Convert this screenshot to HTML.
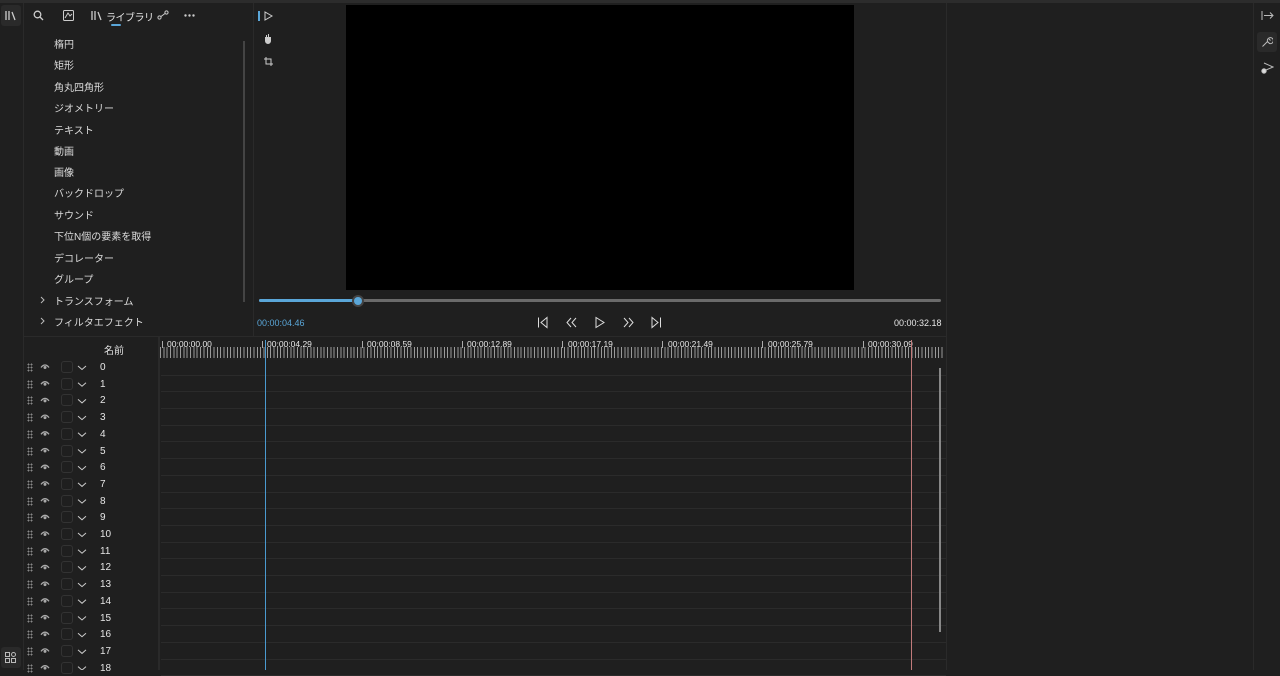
<!DOCTYPE html>
<html><head><meta charset="utf-8"><style>
*{margin:0;padding:0;box-sizing:border-box}
html,body{width:1280px;height:670px}
body{background:#1f1f1f;overflow:hidden;position:relative;font-family:"Liberation Sans","Noto Sans CJK JP",sans-serif;color:#e0e0e0;font-size:10px}
.a{position:absolute}
.lib div{position:absolute;left:54px;font-size:10px;color:#dcdcdc}
.row{position:absolute;left:24px;width:922px;height:16.7px}
.row .g{position:absolute;left:3px;top:4px;width:6px;height:9px;background:radial-gradient(circle,#888 0.8px,transparent 1px) 0 0/3px 3px}
.row .cb{position:absolute;left:37px;top:2px;width:12px;height:12px;border:1px solid #333;border-radius:3px}
.row .n{position:absolute;left:76px;top:3px;font-size:10px;color:#e6e6e6}
.row .ln{position:absolute;left:137px;right:0;bottom:0;height:1px;background:#2b2b2b}
.lab{position:absolute;top:339px;font-size:8.5px;color:#e6e6e6}
</style></head><body>
<div class="a" style="left:0;top:0;width:1280px;height:3px;background:#2c2c2c"></div>
<div class="a" style="left:23px;top:3px;width:1px;height:667px;background:#2a2a2a"></div>
<div class="a" style="left:253px;top:3px;width:1px;height:333px;background:#2a2a2a"></div>
<div class="a" style="left:946px;top:3px;width:1px;height:667px;background:#2a2a2a"></div>
<div class="a" style="left:1253px;top:3px;width:1px;height:667px;background:#2a2a2a"></div>
<div class="a" style="left:24px;top:336px;width:922px;height:1px;background:#2a2a2a"></div>
<div class="a" style="left:158px;top:337px;width:2px;height:333px;background:#2a2a2a"></div>
<div class="a" style="left:1px;top:5px;width:20px;height:21px;background:#2a2a2a;border-radius:3px"></div>
<svg class="a" style="left:5px;top:10px" width="12" height="11"><path d="M1 1v9M4 1v9M7 2l3 8" stroke="#ccc" stroke-width="1.3" fill="none"/></svg>
<div class="a" style="left:1px;top:647px;width:20px;height:21px;background:#2a2a2a;border-radius:3px"></div>
<svg class="a" style="left:5px;top:652px" width="12" height="11" fill="none" stroke="#bbb"><rect x="0.5" y="0.5" width="4" height="4"/><rect x="6.5" y="0.5" width="4" height="4" rx="2"/><rect x="0.5" y="6.5" width="4" height="4"/><rect x="6.5" y="6.5" width="4" height="4"/></svg>
<svg class="a" style="left:33px;top:10px" width="11" height="11" fill="none" stroke="#ccc" stroke-width="1.3"><circle cx="4.5" cy="4.5" r="3.3"/><path d="M7 7l3 3"/></svg>
<svg class="a" style="left:63px;top:10px" width="11" height="11" fill="none" stroke="#ccc"><rect x="0.5" y="0.5" width="10" height="10" rx="1"/><path d="M2 8l3-5 2 3 2-2"/></svg>
<svg class="a" style="left:91px;top:10px" width="12" height="11"><path d="M1 1v9M4 1v9M7 2l3 8" stroke="#ccc" stroke-width="1.3" fill="none"/></svg>
<div class="a" style="left:106px;top:9px;font-size:10px;color:#e8e8e8;letter-spacing:-0.5px">ライブラリ</div>
<div class="a" style="left:111px;top:24px;width:10px;height:2px;background:#5aa6d8;border-radius:1px"></div>
<svg class="a" style="left:157px;top:10px" width="12" height="10" fill="none" stroke="#ccc"><circle cx="2.5" cy="7.5" r="1.6"/><circle cx="9.5" cy="2.5" r="1.6"/><path d="M4 6.5l4-3"/></svg>
<svg class="a" style="left:184px;top:14px" width="11" height="3" fill="#ccc"><circle cx="1.5" cy="1.5" r="1.2"/><circle cx="5.5" cy="1.5" r="1.2"/><circle cx="9.5" cy="1.5" r="1.2"/></svg>
<div class="a" style="left:243px;top:41px;width:2px;height:261px;background:#444"></div>
<div class="lib">
<div style="top:36px">楕円</div><div style="top:57px">矩形</div><div style="top:79px">角丸四角形</div><div style="top:100px">ジオメトリー</div><div style="top:122px">テキスト</div><div style="top:143px">動画</div><div style="top:164px">画像</div><div style="top:185px">バックドロップ</div><div style="top:207px">サウンド</div><div style="top:228px">下位N個の要素を取得</div><div style="top:250px">デコレーター</div><div style="top:271px">グループ</div><div style="top:293px">トランスフォーム</div><div style="top:314px">フィルタエフェクト</div>
</div>
<svg class="a" style="left:40px;top:296px" width="5" height="8" fill="none" stroke="#bbb"><path d="M1 1l3 3-3 3"/></svg>
<svg class="a" style="left:40px;top:317px" width="5" height="8" fill="none" stroke="#bbb"><path d="M1 1l3 3-3 3"/></svg>
<div class="a" style="left:258px;top:11px;width:2px;height:10px;background:#5aa6d8"></div>
<svg class="a" style="left:264px;top:11px" width="9" height="10" fill="none" stroke="#ccc"><path d="M1 1v8l7-4z"/></svg>
<svg class="a" style="left:263px;top:33px" width="10" height="11" fill="#ccc"><path d="M2 4h6v4a3 3 0 0 1-6 0z M3 2h1v3H3zM5 1h1v3H5z"/></svg>
<svg class="a" style="left:264px;top:57px" width="9" height="9" fill="none" stroke="#ccc"><path d="M2 0v7h7M0 2h7v7"/></svg>
<div class="a" style="left:346px;top:5px;width:508px;height:285px;background:#000"></div>
<div class="a" style="left:259px;top:299px;width:682px;height:3px;background:#6a6a6a;border-radius:2px"></div>
<div class="a" style="left:259px;top:299px;width:99px;height:3px;background:#5aa6d8;border-radius:2px"></div>
<div class="a" style="left:352px;top:295px;width:12px;height:12px;border-radius:50%;background:#444"></div>
<div class="a" style="left:354px;top:297px;width:8px;height:8px;border-radius:50%;background:#5aa6d8"></div>
<div class="a" style="left:257px;top:318px;font-size:9px;color:#5aa6d8">00:00:04.46</div>
<div class="a" style="left:894px;top:318px;font-size:9px;color:#e6e6e6">00:00:32.18</div>
<svg class="a" style="left:537px;top:316px" width="126" height="13" fill="none" stroke="#ddd"><path d="M1.5 1.5v10M10 1.5l-6 5 6 5z"/><path d="M34 2l-4 4.5 4 4.5M39 2l-4 4.5 4 4.5"/><path d="M59 1.5v10l8-5z"/><path d="M87 2l4 4.5-4 4.5M92 2l4 4.5-4 4.5"/><path d="M115 1.5l6 5-6 5zM123.5 1.5v10"/></svg>
<div class="a" style="left:104px;top:342px;font-size:10px">名前</div>
<div class="a" style="left:160px;top:347px;width:785px;height:11px;background:repeating-linear-gradient(90deg,#9a9a9a 0 1px,transparent 1px 3.34px)"></div>
<div class="a" style="left:160px;top:337px;width:785px;height:10px;background:#1f1f1f"></div>
<div class="lab" style="left:167px">00:00:00.00</div><div class="lab" style="left:267px">00:00:04.29</div><div class="lab" style="left:367px">00:00:08.59</div><div class="lab" style="left:467px">00:00:12.89</div><div class="lab" style="left:568px">00:00:17.19</div><div class="lab" style="left:668px">00:00:21.49</div><div class="lab" style="left:768px">00:00:25.79</div><div class="lab" style="left:868px">00:00:30.09</div>
<div class="a" style="left:162px;top:341px;width:1px;height:7px;background:#aaa"></div><div class="a" style="left:262px;top:341px;width:1px;height:7px;background:#aaa"></div><div class="a" style="left:362px;top:341px;width:1px;height:7px;background:#aaa"></div><div class="a" style="left:462px;top:341px;width:1px;height:7px;background:#aaa"></div><div class="a" style="left:562px;top:341px;width:1px;height:7px;background:#aaa"></div><div class="a" style="left:662px;top:341px;width:1px;height:7px;background:#aaa"></div><div class="a" style="left:762px;top:341px;width:1px;height:7px;background:#aaa"></div><div class="a" style="left:863px;top:341px;width:1px;height:7px;background:#aaa"></div>
<div style="position:absolute;left:0;top:359px">
<div class="row" style="top:0"><div class="g"></div><div class="cb"></div><div class="n">0</div><div class="ln"></div></div>
<div class="row" style="top:16.7px"><div class="g"></div><div class="cb"></div><div class="n">1</div><div class="ln"></div></div>
<div class="row" style="top:33.4px"><div class="g"></div><div class="cb"></div><div class="n">2</div><div class="ln"></div></div>
<div class="row" style="top:50.1px"><div class="g"></div><div class="cb"></div><div class="n">3</div><div class="ln"></div></div>
<div class="row" style="top:66.8px"><div class="g"></div><div class="cb"></div><div class="n">4</div><div class="ln"></div></div>
<div class="row" style="top:83.5px"><div class="g"></div><div class="cb"></div><div class="n">5</div><div class="ln"></div></div>
<div class="row" style="top:100.2px"><div class="g"></div><div class="cb"></div><div class="n">6</div><div class="ln"></div></div>
<div class="row" style="top:116.9px"><div class="g"></div><div class="cb"></div><div class="n">7</div><div class="ln"></div></div>
<div class="row" style="top:133.6px"><div class="g"></div><div class="cb"></div><div class="n">8</div><div class="ln"></div></div>
<div class="row" style="top:150.3px"><div class="g"></div><div class="cb"></div><div class="n">9</div><div class="ln"></div></div>
<div class="row" style="top:167px"><div class="g"></div><div class="cb"></div><div class="n">10</div><div class="ln"></div></div>
<div class="row" style="top:183.7px"><div class="g"></div><div class="cb"></div><div class="n">11</div><div class="ln"></div></div>
<div class="row" style="top:200.4px"><div class="g"></div><div class="cb"></div><div class="n">12</div><div class="ln"></div></div>
<div class="row" style="top:217.1px"><div class="g"></div><div class="cb"></div><div class="n">13</div><div class="ln"></div></div>
<div class="row" style="top:233.8px"><div class="g"></div><div class="cb"></div><div class="n">14</div><div class="ln"></div></div>
<div class="row" style="top:250.5px"><div class="g"></div><div class="cb"></div><div class="n">15</div><div class="ln"></div></div>
<div class="row" style="top:267.2px"><div class="g"></div><div class="cb"></div><div class="n">16</div><div class="ln"></div></div>
<div class="row" style="top:283.9px"><div class="g"></div><div class="cb"></div><div class="n">17</div><div class="ln"></div></div>
<div class="row" style="top:300.6px"><div class="g"></div><div class="cb"></div><div class="n">18</div><div class="ln"></div></div>
</div>
<svg class="a" style="left:38px;top:363px" width="52" height="307" fill="none">
<defs><g id="r"><path d="M3 4.5q4-5 8 0" stroke="#aaa" stroke-width="1.3"/><circle cx="7" cy="4.5" r="1.5" fill="#aaa"/><path d="M40 3l4 3.5 4-3.5" stroke="#ccc"/></g></defs>
<use href="#r" y="0"/><use href="#r" y="16.7"/><use href="#r" y="33.4"/><use href="#r" y="50.1"/><use href="#r" y="66.8"/><use href="#r" y="83.5"/><use href="#r" y="100.2"/><use href="#r" y="116.9"/><use href="#r" y="133.6"/><use href="#r" y="150.3"/><use href="#r" y="167"/><use href="#r" y="183.7"/><use href="#r" y="200.4"/><use href="#r" y="217.1"/><use href="#r" y="233.8"/><use href="#r" y="250.5"/><use href="#r" y="267.2"/><use href="#r" y="283.9"/><use href="#r" y="300.6"/>
</svg>
<div class="a" style="left:265px;top:340px;width:1px;height:330px;background:#4a9ad0"></div>
<div class="a" style="left:911px;top:340px;width:1px;height:330px;background:#c07a7a"></div>
<div class="a" style="left:939px;top:368px;width:2px;height:264px;background:#888"></div>
<svg class="a" style="left:1261px;top:10px" width="13" height="11" fill="none" stroke="#bbb"><path d="M1 1v9M3 5.5h9M9 2.5l3 3-3 3"/></svg>
<div class="a" style="left:1257px;top:32px;width:20px;height:20px;background:#2a2a2a;border-radius:3px"></div>
<svg class="a" style="left:1261px;top:36px" width="12" height="12" fill="none" stroke="#bbb"><path d="M1.5 10.5l5-5M6.5 5.5a3 3 0 1 1 2 2zM8 3l1.5 1.5"/></svg>
<svg class="a" style="left:1261px;top:61px" width="13" height="13" fill="none" stroke="#bbb"><path d="M3 2l9 4-7 3"/><circle cx="3" cy="10" r="2.2" fill="#ddd"/></svg>
</body></html>
